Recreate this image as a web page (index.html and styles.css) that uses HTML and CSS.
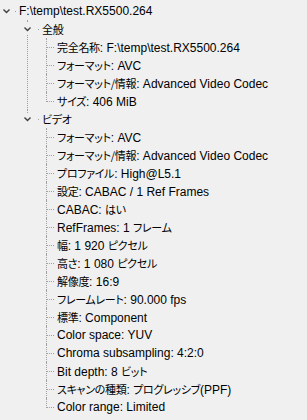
FILE: index.html
```html
<!DOCTYPE html>
<html lang="ja">
<head>
    <meta charset="UTF-8">
    <title>MediaInfo</title>
    <link rel="stylesheet" href="styles.css">
</head>
<body>
    <ul class="tree">
        <li class="root">
            <div class="row">
                <span class="toggle"><svg width="7" height="5" viewBox="0 0 7 5"><polyline points="0.5,0.5 3.5,3.5 6.5,0.5" /></svg></span>
                <span class="dot"></span>
                <span class="label">F:\temp\test.RX5500.264</span>
            </div>
            <ul class="group-list">
                <li class="group">
                    <div class="row">
                        <span class="toggle"><svg width="7" height="5" viewBox="0 0 7 5"><polyline points="0.5,0.5 3.5,3.5 6.5,0.5" /></svg></span>
                        <span class="dot"></span>
                        <span class="label"><span class="ja">全般</span></span>
                    </div>
                    <ul class="items">
                        <li><span class="ja">完全名称</span>: F:\temp\test.RX5500.264</li>
                        <li><span class="ja">フォーマット</span>: AVC</li>
                        <li><span class="ja">フォーマット/情報</span>: Advanced Video Codec</li>
                        <li><span class="ja">サイズ</span>: 406 MiB</li>
                    </ul>
                </li>
                <li class="group">
                    <div class="row">
                        <span class="toggle"><svg width="7" height="5" viewBox="0 0 7 5"><polyline points="0.5,0.5 3.5,3.5 6.5,0.5" /></svg></span>
                        <span class="dot"></span>
                        <span class="label"><span class="ja">ビデオ</span></span>
                    </div>
                    <ul class="items">
                        <li><span class="ja">フォーマット</span>: AVC</li>
                        <li><span class="ja">フォーマット/情報</span>: Advanced Video Codec</li>
                        <li><span class="ja">プロファイル</span>: High@L5.1</li>
                        <li><span class="ja">設定</span>: CABAC / 1 Ref Frames</li>
                        <li>CABAC: <span class="ja">はい</span></li>
                        <li>RefFrames: 1 <span class="ja">フレーム</span></li>
                        <li><span class="ja">幅</span>: 1 920 <span class="ja">ピクセル</span></li>
                        <li><span class="ja">高さ</span>: 1 080 <span class="ja">ピクセル</span></li>
                        <li><span class="ja">解像度</span>: 16:9</li>
                        <li><span class="ja">フレームレート</span>: 90.000 fps</li>
                        <li><span class="ja">標準</span>: Component</li>
                        <li>Color space: YUV</li>
                        <li>Chroma subsampling: 4:2:0</li>
                        <li>Bit depth: 8 <span class="ja">ビット</span></li>
                        <li><span class="ja">スキャンの種類</span>: <span class="ja">プログレッシブ</span>(PPF)</li>
                        <li>Color range: Limited</li>
                    </ul>
                </li>
            </ul>
        </li>
    </ul>
</body>
</html>
```

FILE: styles.css
```css
body {
    margin: 0;
    background-color: #f0f0f0;
    font-family: "Liberation Sans", "Noto Sans CJK JP", sans-serif;
    font-size: 12px;
    color: #000;
}
ul {
    list-style: none;
    margin: 0;
    padding: 0;
}
.tree {
    padding-top: 2px;
}
.row {
    display: flex;
    align-items: center;
    height: 18px;
    white-space: nowrap;
}
.ja {
    font-family: "Noto Sans CJK JP", sans-serif;
    font-size: 11px;
    font-feature-settings: "palt";
    letter-spacing: -0.3px;
}
.toggle {
    display: flex;
    align-items: center;
    justify-content: center;
    width: 16px;
    height: 12px;
    background-color: #f0f0f0;
    position: relative;
    z-index: 1;
}
.toggle svg {
    fill: none;
    stroke: #404040;
    stroke-width: 1.4;
}
.dot {
    width: 1px;
    height: 1px;
    background-color: #a0a0a0;
    margin: 0 3px 0 0;
}

/* root */
.root > .row {
    margin-left: -2px;
}
.root > .row .dot {
    margin-left: 1px;
}

/* 全般 / ビデオ */
.group-list {
    margin-left: 27px;
}
.group {
    position: relative;
}
.group::before {
    content: "";
    position: absolute;
    left: 0;
    top: 0;
    height: 100%;
    border-left: 1px dotted #a0a0a0;
}
.group:last-child::before {
    height: 9px;
}
.group > .row {
    margin-left: -8px;
}
.group > .row .dot {
    margin-left: 3px;
}

/* 項目 */
.items {
    margin-left: 19px;
}
.items li {
    position: relative;
    height: 18px;
    line-height: 18px;
    padding-left: 11px;
    white-space: nowrap;
}
.items li::before {
    content: "";
    position: absolute;
    left: 0;
    top: 0;
    width: 7px;
    height: 9px;
    border-left: 1px dotted #a0a0a0;
    border-bottom: 1px dotted #a0a0a0;
}
.items li::after {
    content: "";
    position: absolute;
    left: 0;
    top: 9px;
    height: 9px;
    border-left: 1px dotted #a0a0a0;
}
.items li:last-child::after {
    display: none;
}
```
